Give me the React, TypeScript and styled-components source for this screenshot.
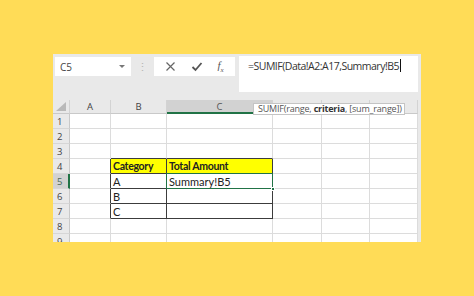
import styled, { createGlobalStyle } from "styled-components";

const GREEN = "#217346";

const cols = ["A", "B", "C", "D", "E", "F"];
const rows = [1, 2, 3, 4, 5, 6, 7, 8, 9];
// D, E and F headers sit under the function tooltip
const hiddenHeads = ["D", "E", "F"];

const data: Record<string, { text: string; bold?: boolean; fill?: boolean }> = {
  B4: { text: "Category", bold: true, fill: true },
  C4: { text: "Total Amount", bold: true, fill: true },
  B5: { text: "A" },
  C5: { text: "Summary!B5" },
  B6: { text: "B" },
  B7: { text: "C" },
};

const boxed = (r: number, c: number) => r >= 4 && r <= 7 && c >= 1 && c <= 2;

const App = () => {
  return (
    <>
      <GlobalStyle />
      <Page>
        <Panel>
          <Toolbar>
            <NameBox>
              <span>C5</span>
              <Caret />
            </NameBox>
            <Grip>⋮</Grip>
            <FuncBox>
              <svg width="11" height="11" viewBox="0 0 11 11">
                <path d="M1.5 1.5 L9.5 9.5 M9.5 1.5 L1.5 9.5" stroke="#666" strokeWidth="1.2" fill="none" />
              </svg>
              <svg width="12" height="11" viewBox="0 0 12 11">
                <path d="M1.5 6 L4.5 9 L10.5 2" stroke="#555" strokeWidth="1.8" fill="none" />
              </svg>
              <Fx>
                f<sub>x</sub>
              </Fx>
            </FuncBox>
            <FormulaBox>
              =SUMIF(Data!A2:A17,Summary!B5<Cursor />
            </FormulaBox>
          </Toolbar>

          <Sheet>
            <Corner>
              <svg width="11" height="10" viewBox="0 0 11 10">
                <path d="M10 0 L10 9 L0 9 Z" fill="#b9b9b9" />
              </svg>
            </Corner>
            {cols.map((c) => (
              <ColHead key={c} $active={c === "C"}>
                {hiddenHeads.includes(c) ? null : c}
              </ColHead>
            ))}
            {rows.map((r) => (
              <Row key={r}>
                <RowHead $active={r === 5}>{r}</RowHead>
                {cols.map((c, ci) => {
                  const cell = data[c + r];
                  const isBoxed = boxed(r, ci);
                  return (
                    <Cell
                      key={c}
                      $fill={cell?.fill}
                      $bold={cell?.bold}
                      $rightDark={isBoxed || boxed(r, ci + 1)}
                      $bottomDark={isBoxed || boxed(r + 1, ci)}
                      $selected={c + r === "C5"}
                    >
                      {cell?.text}
                    </Cell>
                  );
                })}
              </Row>
            ))}
          </Sheet>

          <Tooltip>
            SUMIF(range, <b>criteria</b>, [sum_range])
          </Tooltip>
        </Panel>
      </Page>
    </>
  );
};

export default App;

const GlobalStyle = createGlobalStyle`
  body {
    margin: 0;
    background: #ffdc57;
    font-family: "Open Sans", "Noto Sans", sans-serif;
  }
`;

const Page = styled.div`
  width: 474px;
  height: 296px;
  padding: 54px 0 0 53px;
  box-sizing: border-box;
  overflow: hidden;
`;

const Panel = styled.div`
  position: relative;
  width: 368px;
  height: 188px;
  background: #e9e9e9;
  overflow: hidden;
  display: flex;
  flex-direction: column;
`;

const Toolbar = styled.div`
  height: 46px;
  display: flex;
  align-items: flex-start;
  padding: 3px 0 0 2px;
  box-sizing: border-box;
  flex-shrink: 0;
`;

const NameBox = styled.div`
  width: 76px;
  height: 19px;
  background: #fff;
  display: flex;
  align-items: center;
  justify-content: space-between;
  padding: 0 6px 0 5px;
  box-sizing: border-box;
  font-size: 10px;
  color: #444;
`;

const Caret = styled.span`
  width: 0;
  height: 0;
  border-left: 3px solid transparent;
  border-right: 3px solid transparent;
  border-top: 3px solid #777;
`;

const Grip = styled.div`
  width: 23px;
  height: 19px;
  display: flex;
  align-items: center;
  justify-content: center;
  color: #b5b5b5;
  font-size: 11px;
`;

const FuncBox = styled.div`
  width: 81px;
  height: 19px;
  background: #fff;
  display: flex;
  align-items: center;
  justify-content: space-around;
  padding: 0 4px;
  box-sizing: border-box;
`;

const Fx = styled.span`
  font-family: "Liberation Serif", serif;
  font-style: italic;
  font-size: 11px;
  color: #555;

  sub {
    font-size: 7px;
  }
`;

const FormulaBox = styled.div`
  margin: -1px 0 0 4px;
  width: 179px;
  height: 36px;
  background: #fff;
  padding: 3px 0 0 9px;
  box-sizing: border-box;
  font-size: 10.5px;
  letter-spacing: -0.5px;
  color: #333;
  white-space: nowrap;
  display: flex;
  align-items: flex-start;
  line-height: 14px;
`;

const Cursor = styled.span`
  display: inline-block;
  width: 1px;
  height: 13px;
  background: #111;
  margin-left: 1px;
`;

const Sheet = styled.div`
  display: grid;
  grid-template-columns: 17px 41px 56px 106px 49px 48px 48px;
  grid-template-rows: 14px;
  grid-auto-rows: 15px;
`;

const Row = styled.div`
  display: contents;
`;

const Corner = styled.div`
  background: #e9e9e9;
  border-right: 1px solid #d3d3d3;
  border-bottom: 1px solid #c9c9c9;
  display: flex;
  align-items: flex-end;
  justify-content: flex-end;
  padding: 0 2px 1px 0;
`;

const ColHead = styled.div<{ $active?: boolean }>`
  background: ${(p) => (p.$active ? "#d2d2d2" : "#e9e9e9")};
  border-right: 1px solid #d3d3d3;
  border-bottom: ${(p) => (p.$active ? `2px solid ${GREEN}` : "1px solid #c9c9c9")};
  display: flex;
  align-items: center;
  justify-content: center;
  font-size: 9.5px;
  color: ${(p) => (p.$active ? "#555" : "#444")};
`;

const RowHead = styled.div<{ $active?: boolean }>`
  background: ${(p) => (p.$active ? "#d2d2d2" : "#e9e9e9")};
  border-right: ${(p) => (p.$active ? `2px solid ${GREEN}` : "1px solid #c9c9c9")};
  border-bottom: 1px solid #d6d6d6;
  display: flex;
  align-items: center;
  padding-left: 4px;
  font-size: 9.5px;
  color: ${(p) => (p.$active ? "#4a6a55" : "#444")};
`;

const Cell = styled.div<{
  $fill?: boolean;
  $bold?: boolean;
  $rightDark?: boolean;
  $bottomDark?: boolean;
  $selected?: boolean;
}>`
  position: relative;
  background: ${(p) => (p.$fill ? "#ffff00" : "#fff")};
  border-right: 1px solid ${(p) => (p.$rightDark ? "#3c3c3c" : "#dcdcdc")};
  border-bottom: 1px solid ${(p) => (p.$bottomDark ? "#3c3c3c" : "#dcdcdc")};
  font-family: "Lato", "Open Sans", sans-serif;
  font-size: ${(p) => (p.$bold ? "10.5px" : "11px")};
  letter-spacing: ${(p) => (p.$bold ? "-0.3px" : "0")};
  font-weight: ${(p) => (p.$bold ? 700 : 400)};
  color: #222;
  display: flex;
  align-items: center;
  padding-left: 2px;
  white-space: nowrap;

  ${(p) =>
    p.$selected &&
    `
    &::after {
      content: "";
      position: absolute;
      left: -1px;
      top: -1px;
      right: -1px;
      bottom: -1px;
      border: 1px solid ${GREEN};
    }
    &::before {
      content: "";
      position: absolute;
      right: -3px;
      bottom: -3px;
      width: 4px;
      height: 4px;
      background: ${GREEN};
      border: 1px solid #fff;
      box-sizing: border-box;
      z-index: 1;
    }
  `}
`;

const Tooltip = styled.div`
  position: absolute;
  left: 200px;
  top: 49px;
  width: 152px;
  height: 12px;
  background: #fff;
  border: 1px solid #c4c4c4;
  box-sizing: border-box;
  font-size: 9px;
  letter-spacing: -0.2px;
  line-height: 10px;
  color: #555;
  padding-left: 4px;
  white-space: nowrap;
  overflow: hidden;

  b {
    color: #333;
  }
`;
